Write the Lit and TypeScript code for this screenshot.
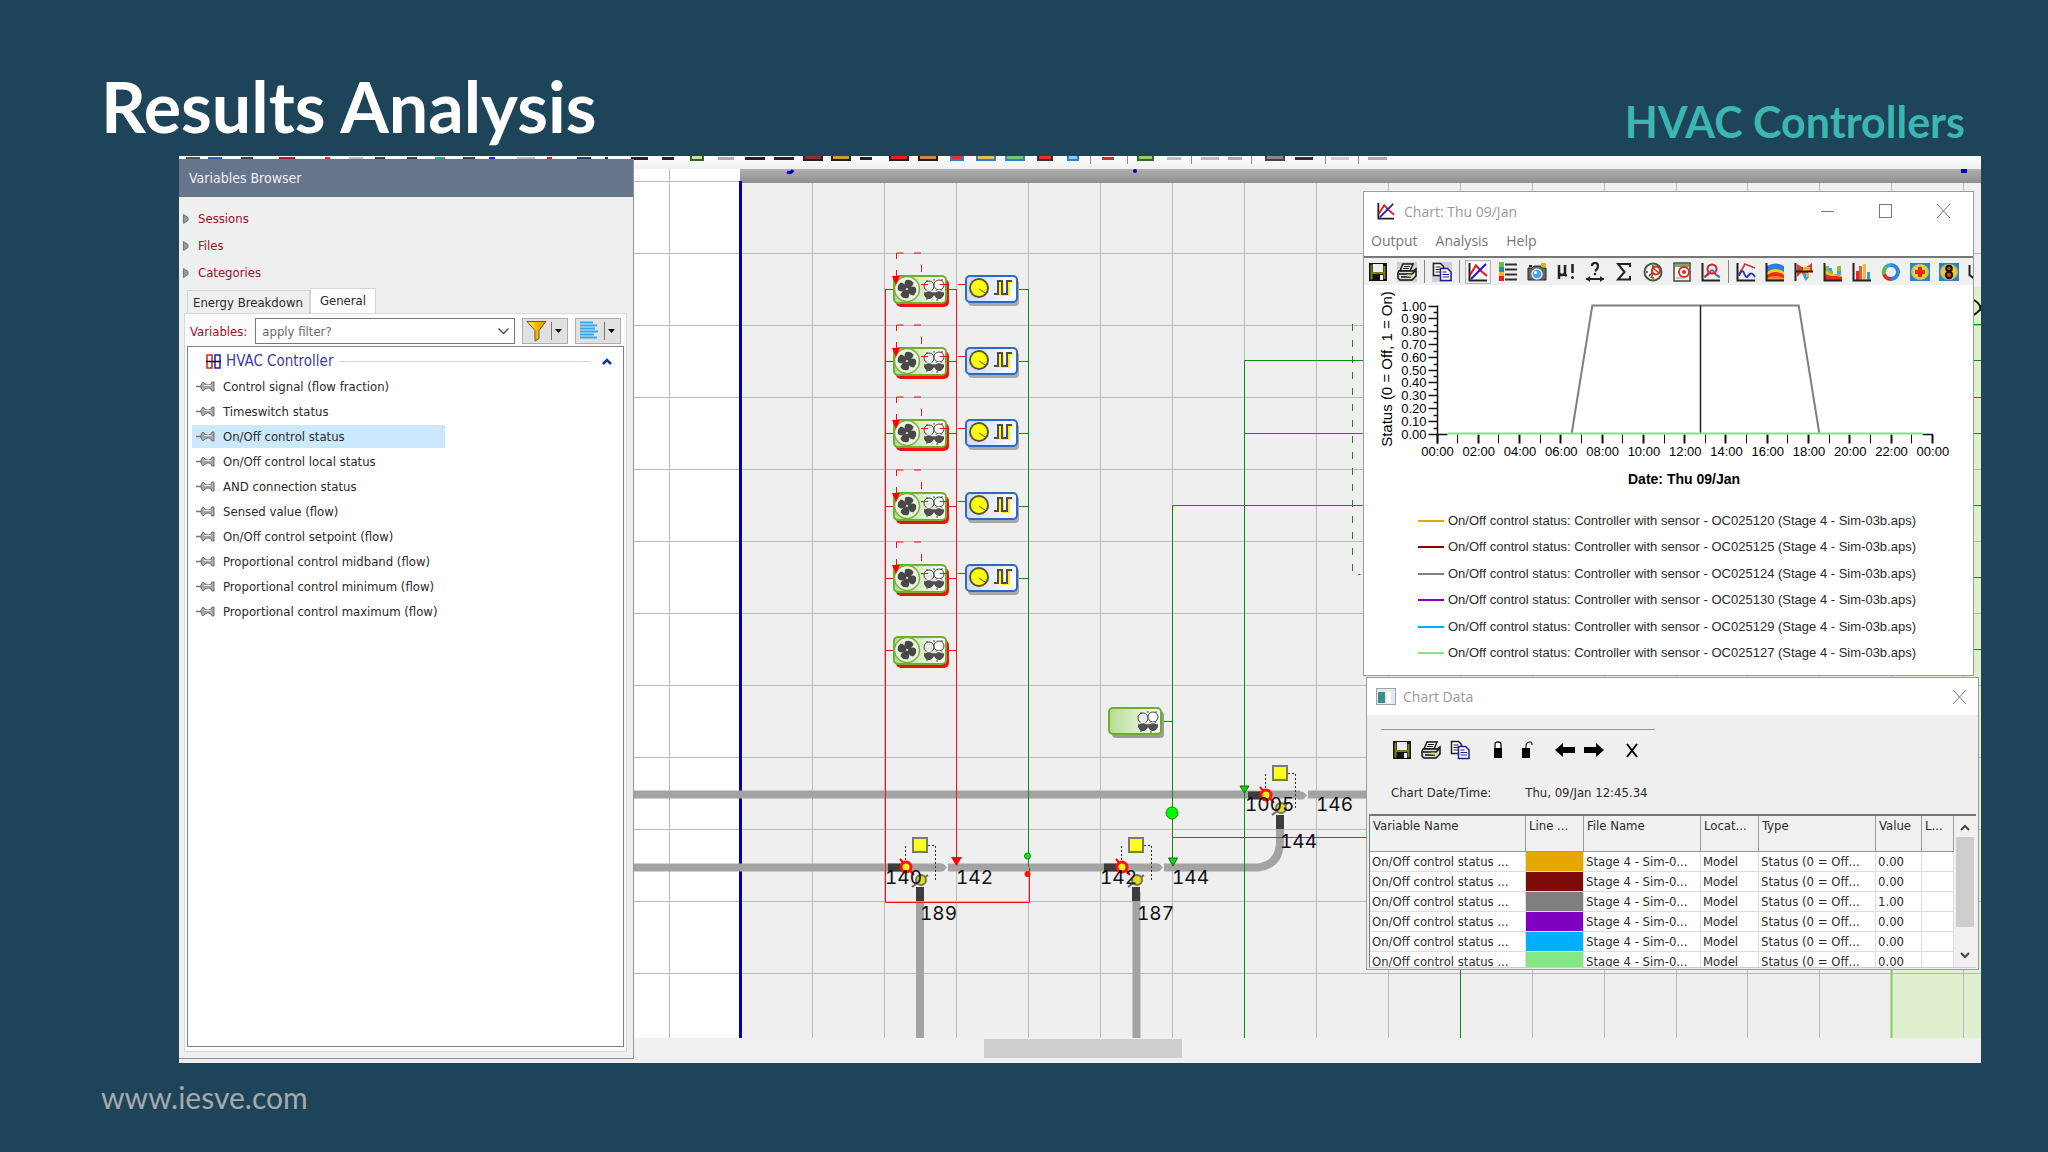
import { LitElement, html, svg, css, nothing } from "lit";
import { customElement, state } from "lit/decorators.js";
import { classMap } from "lit/directives/class-map.js";

/* ---------- shared styles ---------- */

const shared = css`
  :host {
    display: block;
    box-sizing: border-box;
    font-family: "DejaVu Sans Condensed", "DejaVu Sans", "Noto Sans", sans-serif;
    font-size: 13px;
    color: #2a2a2a;
  }
  *,
  *::before,
  *::after {
    box-sizing: border-box;
  }
  button {
    font: inherit;
    color: inherit;
    background: none;
    border: 0;
    padding: 0;
    margin: 0;
    text-align: left;
  }
  svg {
    display: block;
  }
`;

const windowStyles = css`
  .titlebar {
    display: flex;
    align-items: center;
    background: #fff;
    padding: 0 22px 0 13px;
    gap: 9px;
    color: #999;
    font-family: "Open Sans", "Noto Sans", sans-serif;
    font-size: 14px;
  }
  .caption {
    flex: 1;
    margin: 0;
    font-size: 14px;
    font-weight: 400;
  }
  .window-buttons {
    display: flex;
    gap: 44px;
  }
`;

/* ---------- icons ---------- */

const icon = (body: unknown, size = 20) =>
  html`<svg width=${size} height=${size} viewBox="0 0 20 20" aria-hidden="true">${body}</svg>`;

const axes = svg`<path d="M1.5 1V18.5H19" fill="none" stroke="#222" stroke-width="2"/>`;

const icons: Record<string, unknown> = {
  save: svg`<rect x="1" y="1" width="18" height="18" fill="#111"/><rect x="2.500" y="2.500" width="2" height="15" fill="#7d7d1e"/><rect x="15.500" y="4" width="2" height="13" fill="#7d7d1e"/><rect x="5" y="2" width="10" height="8" fill="#eee"/><rect x="3" y="10" width="14" height="2" fill="#7d7d1e"/><rect x="12" y="13" width="3" height="5" fill="#eee"/>`,
  print: svg`<path d="M6 2h10l-3 7H3z" fill="#fff" stroke="#111" stroke-width="1.500"/><path d="M7 4.500h6M6 6.500h6" stroke="#111"/><path d="M2 9h14l3-2v7l-4 4H3l-2-2v-5z" fill="#ddd" stroke="#111" stroke-width="1.500"/><path d="M2 12h13l3-3M4 15h10" stroke="#111" fill="none" stroke-width="1.500"/><rect x="10" y="12.500" width="4" height="2" fill="#e6e04a"/>`,
  copy: svg`<path d="M1.500 1.500h7l3 3v9h-10z" fill="#fff" stroke="#222" stroke-width="1.500"/><path d="M3.500 5h5M3.500 7.500h5M3.500 10h5" stroke="#222"/><path d="M8.500 6.500h7l3.500 3.500v8.500H8.500z" fill="#fff" stroke="#1b1b96" stroke-width="1.500"/><path d="M10.500 10h4M10.500 12.500h6.500M10.500 15h6.500" stroke="#1b1b96"/>`,
  chart: svg`${axes}<path d="M2 13L8 3.500 13 9l6 5" fill="none" stroke="#e8131b" stroke-width="2"/><path d="M3 17L18 2" stroke="#1a1ae0" stroke-width="2"/>`,
  legend: svg`<rect x="1" y="0" width="5" height="5" fill="#6cbf3d"/><rect x="1" y="5" width="5" height="5" fill="#1b87e0"/><rect x="1" y="10" width="5" height="4" fill="#f4b41e"/><rect x="1" y="14" width="5" height="5" fill="#ed1c1c"/><path d="M7 2.500h12M7 7.500h12M7 12.500h12M7 17.500h12" stroke="#333" stroke-width="2"/>`,
  camera: svg`<path d="M1 6h4l2-2h7l1 2h4v12H1z" fill="#666" stroke="#222"/><rect x="14" y="1" width="5" height="4" fill="#d9b90c"/><rect x="2" y="3" width="3" height="2" fill="#222"/><circle cx="10" cy="12" r="5" fill="#3fa5ef" stroke="#dfeefa" stroke-width="1.500"/><circle cx="8.500" cy="10.500" r="1.500" fill="#fff"/>`,
  mean: svg`<path d="M3 3v14M3 4v6q0 3 3 3t3-3V3v9q0 2 2 1" fill="none" stroke="#222" stroke-width="2.500"/><path d="M16.500 2v9" stroke="#222" stroke-width="2.500"/><circle cx="16.500" cy="15.500" r="1.500" fill="#222"/>`,
  range: svg`<path d="M7 4q0-3 3-3t3 3-3 5" fill="none" stroke="#222" stroke-width="2.200"/><circle cx="10" cy="12" r="1.300" fill="#222"/><path d="M1 17h18" stroke="#222" stroke-width="2"/><path d="M5 14l-4 3 4 3M15 14l4 3-4 3" fill="#222"/>`,
  sum: svg`<path d="M16 5V2H4l6.500 8L4 17.500h12V14" fill="none" stroke="#222" stroke-width="2"/>`,
  clock: svg`<circle cx="10" cy="10" r="8.500" fill="#f4f7f0" stroke="#3a5f35" stroke-width="2"/><path d="M10 3v2M10 15v2M3 10h2M6 14l4-4" stroke="#444" stroke-width="1.500"/><circle cx="13" cy="8.500" r="4" fill="none" stroke="#d02a2a" stroke-width="2"/><path d="M10 12l-2 4M10 6l6 5" stroke="#d02a2a" stroke-width="1.500"/>`,
  report: svg`<rect x="2" y="1" width="16" height="18" fill="#f3f5ee" stroke="#444" stroke-width="1.500"/><rect x="3" y="2" width="14" height="3" fill="#79a86b"/><circle cx="12" cy="10" r="5" fill="none" stroke="#e02626" stroke-width="1.800"/><circle cx="12" cy="10" r="2" fill="#e02626"/><path d="M4 16h8" stroke="#999"/>`,
  probe: svg`${axes}<path d="M3 15q4-1 6-5t4 0 6 5" fill="none" stroke="#3d7db5" stroke-width="2"/><circle cx="11" cy="7" r="4.500" fill="none" stroke="#d9242a" stroke-width="2"/><path d="M8 10l-4 5" stroke="#d9242a" stroke-width="2"/>`,
  lines: svg`${axes}<path d="M2 14L9 2l10 4" fill="none" stroke="#c33a45" stroke-width="1.800"/><path d="M3 14q3-8 5-3t3 4 3-3 5 3" fill="none" stroke="#2c2cc8" stroke-width="1.800"/>`,
  area: svg`<path d="M2 4q8-5 17 0v14H2z" fill="#2e7ee0"/><path d="M2 10q8-6 17 0v8H2z" fill="#f3d31c"/><path d="M2 13q8-6 17 0v5H2z" fill="#ee2b1e"/><path d="M2 16q8-4 17 0v2H2z" fill="#f38a1c"/>${axes}`,
  tornado: svg`<path d="M1.500 1v18" stroke="#222" stroke-width="2"/><path d="M3 2l5 3h4l2-1 4-3v9h-4v2H9l-2-1-4 4z" fill="#e2382a"/><path d="M9 5h7v5H9z" fill="#f4b41e"/><path d="M8 11h7v4l-3 4-2-3z" fill="#38a0e8"/><path d="M12 11h3v4h-3z" fill="#f4b41e"/><path d="M2 9.500h17" stroke="#222" stroke-width="2"/>`,
  stack: svg`<path d="M2 4h4v5h4v3h4V4h4v14H2z" fill="#7fc14a"/><path d="M6 6h3v3H6zM14 9h4v3h-4z" fill="#3aa2e8"/><path d="M2 9h3l2 3h4l3 2h5v4H2z" fill="#f4c21e"/><path d="M2 12l6 2h5l6 1v3H2z" fill="#e62b20"/>${axes}`,
  bars: svg`<rect x="4" y="9" width="3" height="9" fill="#e8241e"/><rect x="7" y="4" width="3" height="14" fill="#e8583e"/><rect x="11" y="2" width="3" height="16" fill="#f5ba28"/><rect x="15" y="10" width="3" height="8" fill="#3b9ae8"/>${axes}`,
  donut: svg`<g fill="none" stroke-width="4"><path d="M10 3a7 7 0 0 1 0 14" stroke="#2b86dd"/><path d="M10 17a7 7 0 0 1-7-5" stroke="#e22b28"/><path d="M3 12a7 7 0 0 1 2-7" stroke="#5cb84a"/><path d="M5 5a7 7 0 0 1 5-2" stroke="#39a3da"/></g>`,
  heat: svg`<rect x="0" y="1" width="20" height="18" fill="#2f7fc8"/><ellipse cx="10" cy="10" rx="9" ry="8" fill="#9ad07a"/><ellipse cx="10" cy="10" rx="7.500" ry="7" fill="#f7d320"/><path d="M8 5h4v3h3v4h-3v3H8v-3H5V8h3z" fill="#ea221c"/>`,
  heatNumber: svg`<rect x="0" y="1" width="20" height="18" fill="#2f7fc8"/><ellipse cx="10" cy="10" rx="9" ry="8" fill="#9ad07a"/><ellipse cx="10" cy="10" rx="7.500" ry="7" fill="#f3c91f"/><circle cx="10" cy="6.500" r="2.800" fill="#e8371e" stroke="#111" stroke-width="2"/><circle cx="10" cy="13" r="3.200" fill="#e8371e" stroke="#111" stroke-width="2"/>`,
  partial: svg`<path d="M1.500 3v10l5 4" fill="none" stroke="#222" stroke-width="2"/>`,
  lock: svg`<path d="M7 9V4q0-2 3-2t3 2v5" fill="#fff" stroke="#111" stroke-width="1.300"/><rect x="6" y="8" width="8" height="10" fill="#000"/>`,
  unlock: svg`<path d="M9 9V6q0-3 3-4t3 3" fill="none" stroke="#333" stroke-width="1.300"/><rect x="5" y="8" width="8" height="10" fill="#000"/>`,
  left: svg`<path d="M0 10l8-7v4h12v6H8v4z" fill="#000"/>`,
  right: svg`<path d="M20 10l-8-7v4H0v6h12v4z" fill="#000"/>`,
  cross: svg`<path d="M5 4l10 13M15 4L5 17" stroke="#000" stroke-width="2" fill="none"/>`,
};

const minimise = html`<svg width="14" height="14" aria-hidden="true"><path d="M0 7.500h13" stroke="#777"/></svg>`;
const maximise = html`<svg width="14" height="14" aria-hidden="true"><rect x="0.500" y="0.500" width="12" height="13" fill="none" stroke="#777"/></svg>`;
const close = html`<svg width="14" height="14" aria-hidden="true"><path d="M0 0l13 14M13 0L0 14" stroke="#777" fill="none"/></svg>`;

/* ---------- variables browser ---------- */

const VARIABLES = [
  "Control signal (flow fraction)",
  "Timeswitch status",
  "On/Off control status",
  "On/Off control local status",
  "AND connection status",
  "Sensed value (flow)",
  "On/Off control setpoint (flow)",
  "Proportional control midband (flow)",
  "Proportional control minimum (flow)",
  "Proportional control maximum (flow)",
];

@customElement("variables-browser")
class VariablesBrowser extends LitElement {
  @state() private selected = 2;

  static styles = [
    shared,
    css`
      :host {
        display: flex;
        flex-direction: column;
        background: #efefef;
        border-right: 1px solid #8c949e;
        border-bottom: 1px solid #8c949e;
      }
      .heading {
        margin: 0;
        padding-left: 10px;
        background: #66758c;
        color: #eef1f5;
        font-size: 14px;
        font-weight: 400;
        line-height: 38px;
      }
      .sections {
        display: flex;
        flex-direction: column;
        padding: 8px 4px 2px;
        color: #9c1029;
      }
      .section {
        display: flex;
        align-items: center;
        gap: 9px;
        height: 27px;
      }
      .tabs {
        display: flex;
        align-items: flex-end;
        padding-left: 8px;
      }
      .tab {
        height: 23px;
        padding: 0 6px 0 5px;
        border: 1px solid #d4d4d4;
        border-bottom: 0;
      }
      .tab.active {
        height: 25px;
        padding: 0 9px 2px;
        background: #fff;
      }
      .panel {
        flex: 1;
        display: flex;
        flex-direction: column;
        gap: 2px;
        margin: 0 6px 6px 5px;
        padding: 4px 2px 4px 2px;
        border: 1px solid #d8d8d8;
        background: #fbfbfb;
      }
      .filter {
        display: flex;
        align-items: center;
        padding: 0 3px;
        gap: 7px;
      }
      label {
        padding-right: 1px;
        color: #9c1029;
      }
      .combo {
        position: relative;
        flex: 1;
        display: flex;
      }
      select {
        appearance: none;
        width: 100%;
        height: 26px;
        padding: 0 24px 0 6px;
        border: 1px solid #777;
        border-radius: 0;
        background: #fff;
        color: #6a6a6a;
        font: inherit;
      }
      .combo svg {
        position: absolute;
        right: 6px;
        top: 10px;
        pointer-events: none;
      }
      .split {
        display: flex;
        align-items: center;
        justify-content: center;
        width: 46px;
        height: 26px;
        border: 1px solid #adadad;
        background: #e1e1e1;
      }
      .list {
        flex: 1;
        border: 1px solid #7c7f84;
        background: #fff;
        padding: 1px 4px;
      }
      .group {
        display: flex;
        align-items: center;
        width: 100%;
        height: 26px;
        padding: 0 7px 0 14px;
        gap: 5px;
        color: #3b3ba3;
        font-size: 15px;
      }
      .group .rule {
        flex: 1;
        height: 1px;
        margin-right: 6px;
        background: #d3dae6;
      }
      ul {
        list-style: none;
        margin: 0;
        padding: 0;
      }
      li {
        height: 25px;
        padding: 1px 0;
      }
      .variable {
        display: flex;
        align-items: center;
        gap: 8px;
        width: 253px;
        height: 23px;
        padding-left: 4px;
      }
      .variable.selected {
        background: #cce8ff;
      }
    `,
  ];

  private section(name: string) {
    return html`<button class="section">
      <svg width="6" height="10" aria-hidden="true"><path d="M0.500 0.500L5 3.500v3L0.500 9.500z" fill="#999" stroke="#777" /></svg>${name}
    </button>`;
  }

  render() {
    return html`
      <h2 class="heading">Variables Browser</h2>
      <div class="sections">${["Sessions", "Files", "Categories"].map((s) => this.section(s))}</div>
      <div class="tabs" role="tablist">
        <button class="tab" role="tab" aria-selected="false">Energy Breakdown</button>
        <button class="tab active" role="tab" aria-selected="true">General</button>
      </div>
      <div class="panel">
        <div class="filter">
          <label for="filter">Variables:</label>
          <div class="combo">
            <select id="filter">
              <option>apply filter?</option>
            </select>
            <svg width="11" height="7" aria-hidden="true"><path d="M0.500 0.500l5 5 5-5" fill="none" stroke="#555" stroke-width="1.500" /></svg>
          </div>
          <button class="split" aria-label="Filter">
            <svg width="38" height="22" aria-hidden="true">
              <defs>
                <linearGradient id="gold"><stop offset="0" stop-color="#ffe680" /><stop offset="0.500" stop-color="#fbb800" /><stop offset="1" stop-color="#e08a00" /></linearGradient>
              </defs>
              <path d="M1 1.500h19l-7 9v8l-4 2.500v-10.500z" fill="url(#gold)" stroke="#6b5a2a" />
              <path d="M25.500 2v18" stroke="#777" /><path d="M29 9h7l-3.500 4z" fill="#000" />
            </svg>
          </button>
          <button class="split" aria-label="Layout">
            <svg width="38" height="22" aria-hidden="true">
              <path d="M1 2.500h13M1 5.500h17M1 8.500h15M1 11.500h18M1 14.500h14M1 17.500h17" stroke="#35a7ee" stroke-width="1.800" />
              <path d="M25.500 2v18" stroke="#777" /><path d="M29 9h7l-3.500 4z" fill="#000" />
            </svg>
          </button>
        </div>
        <div class="list">
          <button class="group">
            <svg width="15" height="15" aria-hidden="true">
              <rect x="1" y="1" width="5" height="13" fill="none" stroke="#d81e1e" stroke-width="1.500" />
              <rect x="9" y="1" width="5" height="13" fill="none" stroke="#1d1dcc" stroke-width="1.500" />
              <path d="M0 7.500h15" stroke="#111" stroke-width="1.500" />
            </svg>
            HVAC Controller<span class="rule"></span>
            <svg width="10" height="8" aria-hidden="true"><path d="M1 7l4-4 4 4" fill="none" stroke="#0b3aa0" stroke-width="2.500" /></svg>
          </button>
          <ul>
            ${VARIABLES.map(
              (name, i) => html`<li>
                <button class=${classMap({ variable: true, selected: i === this.selected })} @click=${() => (this.selected = i)}>
                  <svg width="19" height="11" aria-hidden="true">
                    <path d="M0 5.500h5" stroke="#777" stroke-width="1.500" />
                    <path d="M5 4l2-3q4 5 8 2l1-2h2v9h-2l-1-2q-4-3-8 2l-2-3z" fill="#a9a9a9" stroke="#6f6f6f" />
                    <path d="M8 4.500h7" stroke="#e5e5e5" />
                  </svg>
                  ${name}
                </button>
              </li>`,
            )}
          </ul>
        </div>
      </div>
    `;
  }
}

/* ---------- plant schematic ---------- */

@customElement("plant-schematic")
class PlantSchematic extends LitElement {
  static styles = [
    shared,
    css`
      :host {
        overflow: hidden;
        background: #fff;
      }
      svg {
        width: 100%;
        height: 100%;
      }
      .tag {
        font-family: Inter, "Liberation Sans", sans-serif;
        font-size: 19px;
        font-variant-numeric: tabular-nums;
        fill: #111;
      }
      .grid {
        stroke: #b9b9b9;
        stroke-width: 1;
      }
      .pipe {
        fill: none;
        stroke: #a3a3a3;
        stroke-width: 8;
      }
      .dark {
        stroke: #3c3c3c;
        stroke-width: 8;
      }
      .red {
        fill: none;
        stroke: #f01414;
        stroke-width: 1;
      }
      .green {
        fill: none;
        stroke: #128a12;
        stroke-width: 1;
      }
      .dots {
        fill: none;
        stroke: #333;
        stroke-dasharray: 2 2;
      }
    `,
  ];

  private bubbles(x: number, y: number) {
    return svg`<g transform="translate(${x} ${y})" stroke="#444">
      <circle cx="-5" cy="5" r="4.500" fill="#505050"/><circle cx="5" cy="5" r="4.500" fill="#505050"/>
      <circle cx="-5" cy="-3" r="5" fill="#ececec"/><circle cx="5" cy="-4" r="5" fill="#fff"/>
      <path d="M-9 3q4-3 8 0M1 3q4-3 8 0" fill="none" stroke="#eee" stroke-width="1.500"/>
      <path d="M-7-9v2M0-10v2M8-10v2M-8 10h2M2 11h2" fill="none"/>
    </g>`;
  }

  private fan(x: number, y: number) {
    return svg`<g transform="translate(${x} ${y})">
      <circle r="12.500" fill="#e9f4de" stroke="#79b23a" stroke-width="1.500"/>
      ${[20, 110, 200, 290].map(
        (a) => svg`<path transform="rotate(${a})" d="M0 0Q-6-4-4-8Q0-11 4-8Q5-4 0 0z" fill="#474747"/>`,
      )}
      <circle r="1" fill="#eee"/>
    </g>`;
  }

  private controller(row: number) {
    const y = Math.round(289 + row * 72.2);
    const linked = row < 5;
    return svg`
      <path class="red" d="M885.500 ${y + 0.5}h9M948 ${y + 0.5}h8"/>
      <rect x="896" y="${y - 10}" width="53" height="28" rx="5" fill="#ee1111"/>
      <rect x="894" y="${y - 13}" width="52" height="27" rx="4" fill="url(#leaf)" stroke="#6fae2c" stroke-width="2"/>
      ${this.fan(907, y)}${this.bubbles(934, y)}
      ${
        linked
          ? svg`
        <path class="red" d="M896.500 ${y - 30}v-6h7M914 ${y - 36}h7M921.500 ${y - 24}v7M896.500 ${y - 19}v8M921 ${y - 4.5}h7M940 ${y - 4.5}h7M958 ${y - 4.5}h7"/>
        <path d="M892 ${y - 13}h8l-4 9z" fill="#f00"/>
        <rect x="968" y="${y - 10}" width="51" height="27" rx="4" fill="#a8a8a8"/>
        <rect x="966" y="${y - 13}" width="51" height="26" rx="4" fill="url(#sky)" stroke="#2d69c4" stroke-width="2"/>
        <circle cx="979" cy="${y - 1}" r="9" fill="#ff1" stroke="#55553a" stroke-width="2"/>
        <path d="M979 ${y}l6 4" stroke="#55553a"/>
        <path d="M999 ${y + 5}v-13h3v13h6v-13h4" fill="none" stroke="#ffef1c" stroke-width="2" transform="translate(1 1)"/>
        <path d="M994 ${y + 5}h4v-13h4v13h5v-13h5" fill="none" stroke="#4d4d4d" stroke-width="2"/>
        <path class="green" d="M1019 ${y + 0.5}h10"/>`
          : nothing
      }`;
  }

  /* A mixing damper pair with its sensor, placed by the centre of the sensor. */
  private junction(x: number, y: number) {
    return svg`<g transform="translate(${x} ${y})">
      <path d="M18 18.500h5l4 4-4 4h-5z" fill="#a3a3a3"/>
      <path class="dark" d="M-32 22.500h16M0 42v14"/>
      <path class="dots" d="M-14.500 1v14M8 .5h7.500v36"/>
      <rect x="-7" y="-7" width="14" height="14" fill="#ffff1e" stroke="#7a7a6a" stroke-width="2"/>
      <path d="M-8 42l16-12" stroke="#666" stroke-width="2"/>
      <circle cx="1" cy="35" r="5" fill="#e0dc20" stroke="#77774a" stroke-width="2"/>
      <path d="M-20 14l14 16" stroke="#f00" stroke-width="2"/>
      <circle cx="-14" cy="22" r="5" fill="#fff01e" stroke="#f11" stroke-width="3"/>
    </g>`;
  }

  private tag(x: number, y: number, text: string) {
    return svg`<text class="tag" x=${x} y=${y}>${text}</text>`;
  }

  render() {
    const columns = Array.from({ length: 40 }, (_, i) => Math.floor(669 + i * 71.93) + 0.5);
    const rows = Array.from({ length: 30 }, (_, i) => 181.5 + i * 72);
    return html`<svg role="img" aria-label="HVAC plant schematic">
      <defs>
        <linearGradient id="leaf"><stop offset="0" stop-color="#b6dd93" /><stop offset="1" stop-color="#fbfdf8" /></linearGradient>
        <linearGradient id="sky"><stop offset="0" stop-color="#cfdaf2" /><stop offset="1" stop-color="#fdfdff" /></linearGradient>
        <linearGradient id="edge" x2="0" y2="1"><stop offset="0" stop-color="#b0b0b0" /><stop offset="1" stop-color="#8f8f8f" /></linearGradient>
      </defs>
      <g transform="translate(-634 -169)">
        <rect x="740" y="169" width="3000" height="3000" fill="#efefef" />
        <rect x="1891" y="287" width="2000" height="3000" fill="#e0efcd" />
        ${columns.map((x) => svg`<path class="grid" d="M${x} 169V3000"/>`)}
        ${rows.map((y) => svg`<path class="grid" d="M634 ${y}H3600"/>`)}
        <rect x="740" y="169" width="3000" height="14" fill="url(#edge)" />
        <path d="M787 172q4 2 6-2" stroke="#0000b8" stroke-width="3" fill="none" />
        <circle cx="1135" cy="171" r="2" fill="#0000b8" />
        <rect x="1961" y="169" width="6" height="4" fill="#0000b8" />
        <path d="M740.500 181V3000" stroke="#0000aa" stroke-width="3" />
        <path d="M1891.500 900V3000" stroke="#86cf55" stroke-width="2" />
        ${[324, 360, 397, 433, 505, 577, 649].map((y) => svg`<path class="green" d="M1960 ${y + 0.5}h60"/>`)}
        <path d="M1974 300q8 5 6 10l-6 5" fill="none" stroke="#111" stroke-width="2" />

        <path class="pipe" d="M634 794.500H1300M1308 794.500H1500M634 867.500H940M948 867.500H1156M1164 867.500H1258Q1280 865 1280 841V820M920 892V3000M1136.500 892V3000" />

        <path class="red" d="M885.500 289V902.500H1029.500V868M956.500 289V860" />
        <path class="green" d="M1028.500 289V867M1244.500 3000V360.500H1400M1244 433.500H1400M1172.500 860V505.500H1400M1173 837.500H1400M1162 721.500h11M1460.500 900V3000" />
        <path class="green" d="M1352.500 324V574.500h8" stroke-dasharray="7 9" />
        ${[0, 1, 2, 3, 4, 5].map((i) => this.controller(i))}

        <rect x="1112" y="711" width="52" height="27" rx="4" fill="#9c9c9c" />
        <rect x="1109" y="708" width="52" height="26" rx="4" fill="url(#leaf)" stroke="#6fae2c" stroke-width="2" />
        ${this.bubbles(1148, 721)}

        <path d="M951 857h11l-5.500 9z" fill="#f00" />
        <path d="M1168.500 858h9l-4.500 8z" fill="#0d0" stroke="#0a6a0a" />
        <path d="M1240 786h9l-4.500 7z" fill="#0d0" stroke="#0a6a0a" />
        <circle cx="1172" cy="813" r="6" fill="#0f0" stroke="#128a12" />
        <circle cx="1027.500" cy="856" r="3" fill="#0e0" stroke="#128a12" />
        <circle cx="1027.500" cy="874" r="3" fill="#f11" />
        ${this.junction(920, 845)}${this.junction(1136, 845)}${this.junction(1280, 773)}
        ${this.tag(885, 884, "140")}${this.tag(956, 884, "142")}${this.tag(920, 920, "189")}
        ${this.tag(1100, 884, "142")}${this.tag(1172, 884, "144")}${this.tag(1137, 920, "187")}
        ${this.tag(1245, 811, "1005")}${this.tag(1316, 811, "146")}${this.tag(1280, 848, "144")}
      </g>
    </svg>`;
  }
}

/* ---------- chart window ---------- */

const SERIES = [
  { id: "OC025120", color: "#e6a800", value: "0.00" },
  { id: "OC025125", color: "#7f0a0a", value: "0.00" },
  { id: "OC025124", color: "#7f7f7f", value: "1.00" },
  { id: "OC025130", color: "#7f00c0", value: "0.00" },
  { id: "OC025129", color: "#00aeff", value: "0.00" },
  { id: "OC025127", color: "#84e684", value: "0.00" },
];

const CHART_TOOLS = [
  "save", "print", "|", "copy", "|", "chart", "legend", "camera", "mean", "range", "sum", "clock",
  "report", "probe", "|", "lines", "area", "tornado", "stack", "bars", "donut", "heat", "heatNumber", "partial",
];

@customElement("chart-window")
class ChartWindow extends LitElement {
  static styles = [
    shared,
    windowStyles,
    css`
      :host {
        background: #fff;
        border: 1px solid #9b9b9b;
      }
      .titlebar {
        height: 38px;
      }
      .menu {
        display: flex;
        gap: 18px;
        padding: 0 7px;
        height: 26px;
        font-family: "Open Sans", "Noto Sans", sans-serif;
        font-size: 14px;
        color: #777;
        line-height: 22px;
      }
      .menu button {
        height: 22px;
      }
      .tools {
        display: flex;
        align-items: center;
        gap: 9px;
        height: 29px;
        padding-left: 4px;
        overflow: hidden;
        border-top: 2px solid #777;
        background: #f0f0f0;
      }
      .tool {
        flex: none;
      }
      .tool.tinted {
        background: #cfcfd6;
      }
      .tool.pressed {
        padding: 0 1px;
        background: #fbfbfb;
        outline: 1px solid #b4b4b4;
        outline-offset: 1px;
      }
      .divider {
        flex: none;
        width: 1px;
        height: 23px;
        margin: 0 -2px;
        background: #8a8a8a;
      }
      .plot {
        width: 100%;
        height: 210px;
        font-family: "Liberation Sans", Arial, sans-serif;
        font-size: 13px;
      }
      .plot .axis-name {
        font-size: 15px;
      }
      .plot .date {
        font-size: 14px;
        font-weight: 700;
      }
      .legend {
        display: flex;
        flex-direction: column;
        justify-content: space-between;
        height: 152px;
        margin: 16px 0 12px 54px;
        padding: 0;
        list-style: none;
        font-family: "Liberation Sans", Arial, sans-serif;
        font-size: 13px;
        line-height: 20px;
      }
      .entry {
        display: flex;
        align-items: center;
        gap: 4px;
        white-space: nowrap;
      }
      .key {
        width: 26px;
        height: 2px;
      }
    `,
  ];

  private plot() {
    const x0 = 73.5;
    const y1 = 20.5;
    const y0 = 148.5;
    const hour = 20.64;
    const at = (h: number) => x0 + h * hour;
    return html`<svg class="plot" role="img" aria-label="On/Off status through the day">
      ${Array.from({ length: 11 }, (_, i) => {
        const y = Math.round(y0 - i * 12.8) + 0.5;
        return svg`<path d="M${x0 - 9} ${y}h9" stroke="#111" stroke-width="1.500"/>
          ${i < 10 ? svg`<path d="M${x0 - 4} ${y - 6}h4" stroke="#111" stroke-width="1.500"/>` : nothing}
          <text x="${x0 - 11}" y="${y + 4}" text-anchor="end">${(i / 10).toFixed(2)}</text>`;
      })}
      <path d="M${x0} ${y1}V${y0 + 10}M${x0} ${y0 + 1}h10M${at(23.5)} ${y0 + 1}H${at(24)}" fill="none" stroke="#111" stroke-width="1.500" />
      ${Array.from({ length: 25 }, (_, h) => svg`<path d="M${Math.round(at(h)) - 0.5} ${y0 + 1}v9" stroke="#111" stroke-width="${h % 2 ? 1 : 2}"/>`)}
      ${Array.from({ length: 13 }, (_, i) => svg`<text x=${at(i * 2)} y="171" text-anchor="middle">${String((i * 2) % 24).padStart(2, "0")}:00</text>`)}
      <path d="M${at(6.5)} ${y0}L${at(7.5)} ${y1}H${at(17.5)}L${at(18.5)} ${y0}" fill="none" stroke="#7f7f7f" stroke-width="2" />
      <path d="M${Math.round(at(12.75)) - 0.5} ${y1}V${y0}" stroke="#222" stroke-width="1.500" />
      <path d="M${at(0.5)} ${y0}H${at(23.5)}" stroke="#7fe37f" stroke-width="2" />
      <text class="axis-name" transform="translate(28 84) rotate(-90)" text-anchor="middle">Status (0 = Off, 1 = On)</text>
      <text class="date" x="320" y="199" text-anchor="middle">Date: Thu 09/Jan</text>
    </svg>`;
  }

  render() {
    return html`
      <header class="titlebar">
        ${icon(icons.chart, 18)}
        <h2 class="caption">Chart: Thu 09/Jan</h2>
        <div class="window-buttons">
          <button aria-label="Minimise">${minimise}</button>
          <button aria-label="Maximise">${maximise}</button>
          <button aria-label="Close">${close}</button>
        </div>
      </header>
      <nav class="menu"><button>Output</button><button>Analysis</button><button>Help</button></nav>
      <div class="tools" role="toolbar">
        ${CHART_TOOLS.map((name) =>
          name === "|"
            ? html`<span class="divider"></span>`
            : html`<button
                class=${classMap({ tool: true, tinted: name === "copy" || name === "print", pressed: name === "chart" })}
                aria-label=${name}
              >
                ${icon(icons[name])}
              </button>`,
        )}
      </div>
      ${this.plot()}
      <ul class="legend">
        ${SERIES.map(
          (s) => html`<li class="entry">
            <span class="key" style="background:${s.color}"></span>On/Off control status: Controller with sensor - ${s.id} (Stage 4 - Sim-03b.aps)
          </li>`,
        )}
      </ul>
    `;
  }
}

/* ---------- chart data window ---------- */

@customElement("chart-data-window")
class ChartDataWindow extends LitElement {
  static styles = [
    shared,
    windowStyles,
    css`
      :host {
        background: #efefef;
        border: 1px solid #9b9b9b;
      }
      .titlebar {
        height: 37px;
        padding: 0 11px 0 9px;
        gap: 7px;
      }
      .tools {
        display: flex;
        align-items: center;
        gap: 9px;
        width: 274px;
        margin: 14px 0 0 14px;
        padding: 10px 0 9px 11px;
        border-top: 1px solid #9a9a9a;
      }
      .spaced {
        margin-left: 9px;
      }
      .time {
        display: flex;
        gap: 34px;
        margin: 0;
        padding: 15px 24px 12px;
        line-height: 18px;
      }
      dd,
      dt {
        margin: 0;
      }
      .data {
        display: flex;
        height: 154px;
        margin: 0 2px 1px;
        overflow: hidden;
        border-top: 2px solid #777;
        border-left: 1px solid #777;
        border-bottom: 1px solid #ccc;
      }
      table {
        flex: 1;
        table-layout: fixed;
        border-collapse: separate;
        border-spacing: 0;
        background: #fff;
        width: 584px;
      }
      th,
      td {
        overflow: hidden;
        padding: 0 0 0 2px;
        border-right: 1px solid #ddd;
        border-bottom: 1px solid #ddd;
        text-align: left;
        font-weight: 400;
        white-space: nowrap;
      }
      th {
        height: 36px;
        padding: 2px 0 0 3px;
        vertical-align: top;
        background: #f0f0f0;
        border-color: #999;
      }
      td {
        height: 20px;
        line-height: 19px;
      }
      .name {
        width: 156px;
      }
      .line {
        width: 58px;
      }
      .type {
        width: 117px;
      }
      .value {
        width: 46px;
      }
      .last {
        width: 32px;
      }
      .scrollbar {
        display: flex;
        flex-direction: column;
        align-items: center;
        justify-content: space-between;
        width: 22px;
        padding: 8px 0;
        background: #f0f0f0;
      }
      .thumb {
        width: 18px;
        height: 90px;
        margin: 6px 0 auto;
        background: #cdcdcd;
      }
    `,
  ];

  render() {
    const tool = (name: string, label: string, spaced = false) =>
      html`<button class=${classMap({ spaced })} aria-label=${label}>${icon(icons[name])}</button>`;
    return html`
      <header class="titlebar">
        <svg width="20" height="17" aria-hidden="true">
          <rect x="0.500" y="0.500" width="19" height="16" fill="#e6eaec" stroke="#9aa3aa" />
          <rect x="2" y="4" width="7" height="11" fill="#3f8d8b" /><rect x="11" y="4" width="4" height="11" fill="#fff" />
        </svg>
        <h2 class="caption">Chart Data</h2>
        <button aria-label="Close">${close}</button>
      </header>
      <div class="tools" role="toolbar">
        ${tool("save", "Save")}${tool("print", "Print")}${tool("copy", "Copy")}${tool("lock", "Lock", true)}
        ${tool("unlock", "Unlock")}${tool("left", "Previous", true)}${tool("right", "Next")}${tool("cross", "Clear", true)}
      </div>
      <dl class="time"><dt>Chart Date/Time:</dt><dd>Thu, 09/Jan 12:45.34</dd></dl>
      <div class="data">
        <table>
          <thead>
            <tr>
              <th class="name">Variable Name</th>
              <th class="line">Line ...</th>
              <th class="type">File Name</th>
              <th class="line">Locat...</th>
              <th class="type">Type</th>
              <th class="value">Value</th>
              <th class="last">L...</th>
            </tr>
          </thead>
          <tbody>
            ${SERIES.map(
              (s) => html`<tr>
                <td>On/Off control status ...</td>
                <td style="background:${s.color}"></td>
                <td>Stage 4 - Sim-0...</td>
                <td>Model</td>
                <td>Status (0 = Off...</td>
                <td>${s.value}</td>
                <td></td>
              </tr>`,
            )}
          </tbody>
        </table>
        <div class="scrollbar">
          <svg width="10" height="7" aria-hidden="true"><path d="M1 6l4-4 4 4" fill="none" stroke="#444" stroke-width="2" /></svg>
          <span class="thumb"></span>
          <svg width="10" height="7" aria-hidden="true"><path d="M1 1l4 4 4-4" fill="none" stroke="#444" stroke-width="2" /></svg>
        </div>
      </div>
    `;
  }
}

/* ---------- page ---------- */

/* Lower edges of the main toolbar buttons: [x, width, color, accent]. */
const STRIP: [number, number, string, string?][] = [
  [7, 14, "#555"], [29, 14, "#2b62c0"], [62, 12, "#444"], [100, 16, "#a23"], [146, 5, "#e22"], [170, 14, "#bbb"],
  [196, 10, "#444"], [228, 10, "#444"], [256, 10, "#2a8"], [284, 12, "#444"], [310, 6, "#22d"], [338, 18, "#bbb"],
  [368, 5, "#d22"], [398, 14, "#246"], [426, 3, "#333"], [452, 17, "#222"], [483, 12, "#222"], [511, 14, "#3c5c2c", "#cdd8b0"],
  [539, 16, "#aaa"], [566, 20, "#222"], [595, 20, "#222"], [624, 20, "#222", "#833"], [652, 20, "#222", "#c9a227"],
  [681, 12, "#222"], [710, 20, "#222", "#d22"], [739, 20, "#222", "#c84"], [771, 14, "#2f7fd0", "#d33"],
  [797, 20, "#2f7fc8", "#d8c83a"], [826, 20, "#2f7fc8", "#7ac07a"], [858, 16, "#333", "#d33"], [888, 12, "#2f7fd0", "#8cf"],
  [911, 1, "#888"], [923, 12, "#c33"], [948, 1, "#888"], [958, 17, "#363", "#9c6"], [988, 14, "#bbb"], [1012, 1, "#888"],
  [1022, 18, "#bbb"], [1049, 14, "#aaa"], [1072, 1, "#888"], [1086, 20, "#444", "#888"], [1116, 18, "#333"], [1146, 1, "#888"],
  [1152, 18, "#ccc"], [1179, 1, "#888"], [1189, 19, "#aaa"],
];

@customElement("app-root")
class AppRoot extends LitElement {
  static styles = [
    shared,
    css`
      .slide {
        display: flex;
        flex-direction: column;
        min-height: 100vh;
        background: #1e445a;
        font-family: Lato, "Open Sans", sans-serif;
      }
      .head {
        display: flex;
        align-items: flex-end;
        justify-content: space-between;
        height: 156px;
        padding: 0 83px 13px 101px;
      }
      h1 {
        margin: 0;
        color: #fff;
        font-size: 70px;
        line-height: 74px;
        font-weight: 700;
      }
      .topic {
        margin: 0;
        color: #3bb6b0;
        font-size: 43px;
        line-height: 42px;
        font-weight: 700;
      }
      .application {
        flex: 1;
        display: grid;
        grid-template-columns: 455px 1fr;
        grid-template-rows: 3px 10px 1fr;
        margin: 0 67px 0 179px;
        background: #f0f0f0;
      }
      .strip {
        grid-area: 1 / 1 / 3 / 3;
        overflow: hidden;
        background: linear-gradient(#fdfdfd, #f0f0f0);
      }
      .strip svg {
        width: 100%;
        height: 13px;
      }
      .browser {
        grid-area: 2 / 1 / 4 / 2;
        margin-bottom: 4px;
      }
      .workspace {
        grid-area: 3 / 2;
        position: relative;
        display: flex;
        flex-direction: column;
      }
      .schematic {
        flex: 1;
      }
      .track {
        display: flex;
        height: 25px;
        padding: 1px 0 5px 350px;
      }
      .thumb {
        width: 198px;
        background: #cdcdcd;
      }
      .chart {
        position: absolute;
        top: 22px;
        right: 7px;
        width: 611px;
      }
      .chart-data {
        position: absolute;
        top: 508px;
        right: 2px;
        width: 613px;
      }
      .foot {
        height: 89px;
        padding: 16px 101px;
      }
      .site {
        color: #a5a9ac;
        font-size: 30px;
        line-height: 36px;
        text-decoration: none;
      }
    `,
  ];

  render() {
    return html`
      <div class="slide">
        <header class="head">
          <h1>Results Analysis</h1>
          <p class="topic">HVAC Controllers</p>
        </header>
        <main class="application">
          <div class="strip">
            <svg aria-hidden="true">
              ${STRIP.map(([x, w, color, accent]) =>
                w === 1
                  ? svg`<rect x=${x} y="0" width="1" height="8" fill=${color}/>`
                  : svg`<rect x=${x} y=${accent ? 0 : 1} width=${w} height=${accent ? 5 : 3} fill=${color}/>${accent ? svg`<rect x=${x + 2} y="0" width=${w - 4} height="3" fill=${accent}/>` : nothing}`,
              )}
            </svg>
          </div>
          <variables-browser class="browser"></variables-browser>
          <section class="workspace">
            <plant-schematic class="schematic"></plant-schematic>
            <div class="track"><span class="thumb"></span></div>
            <chart-window class="chart"></chart-window>
            <chart-data-window class="chart-data"></chart-data-window>
          </section>
        </main>
        <footer class="foot"><a class="site" href="https://www.iesve.com">www.iesve.com</a></footer>
      </div>
    `;
  }
}
